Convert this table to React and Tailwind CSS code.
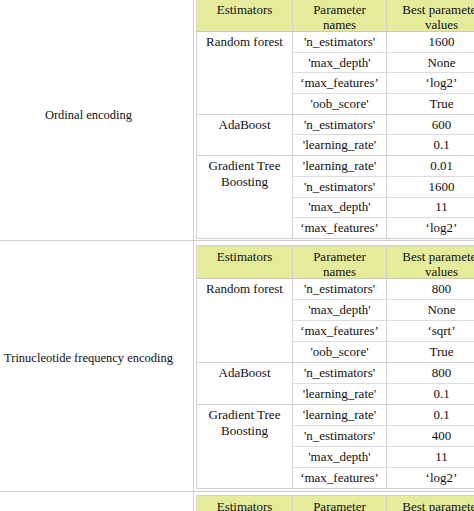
import React from "react";

const serif = { fontFamily: '"Liberation Serif", "Times New Roman", serif' };

const tables = [
  {
    label: "Ordinal encoding",
    groups: [
      { name: ["Random forest"], rows: [["'n_estimators'", "1600"], ["'max_depth'", "None"], ["\u2018max_features\u2019", "\u2018log2\u2019"], ["'oob_score'", "True"]] },
      { name: ["AdaBoost"], rows: [["'n_estimators'", "600"], ["'learning_rate'", "0.1"]] },
      { name: ["Gradient Tree", "Boosting"], rows: [["'learning_rate'", "0.01"], ["'n_estimators'", "1600"], ["'max_depth'", "11"], ["\u2018max_features\u2019", "\u2018log2\u2019"]] },
    ],
  },
  {
    label: "Trinucleotide frequency encoding",
    groups: [
      { name: ["Random forest"], rows: [["'n_estimators'", "800"], ["'max_depth'", "None"], ["\u2018max_features\u2019", "\u2018sqrt\u2019"], ["'oob_score'", "True"]] },
      { name: ["AdaBoost"], rows: [["'n_estimators'", "800"], ["'learning_rate'", "0.1"]] },
      { name: ["Gradient Tree", "Boosting"], rows: [["'learning_rate'", "0.1"], ["'n_estimators'", "400"], ["'max_depth'", "11"], ["\u2018max_features\u2019", "\u2018log2\u2019"]] },
    ],
  },
];

function Header() {
  return (
    <div className="flex h-[33px] border-b border-[#c8c8c8] bg-[#e4ec9c] leading-[15px] text-center">
      <div className="w-[96px] shrink-0 border-r border-[#d2d2d2] pt-[3px]">Estimators</div>
      <div className="w-[94px] shrink-0 border-r border-[#d2d2d2] pt-[3px]">
        Parameter
        <br />
        names
      </div>
      <div className="w-[110px] shrink-0 border-r border-[#d2d2d2] pt-[3px] whitespace-nowrap">
        Best parameter
        <br />
        values
      </div>
    </div>
  );
}

function DataTable({ groups, tight }) {
  const rowCls = tight ? "h-[20.7px]" : "h-[21px]";
  return (
    <div className="w-[301px] border-l border-t border-[#d2d2d2]">
      <Header />
      {groups.map((g, gi) => (
        <div key={gi} className="flex">
          <div className="w-[96px] shrink-0 border-b border-r border-[#d2d2d2] pt-[2px] text-center leading-[16px]">
            {g.name.map((n, i) => (
              <div key={i}>{n}</div>
            ))}
          </div>
          <div className="flex flex-col">
            {g.rows.map((r, ri) => (
              <div
                key={ri}
                className={
                  "flex border-b " +
                  rowCls +
                  (ri < g.rows.length - 1 ? " border-[#dcdcdc]" : " border-[#d2d2d2]")
                }
              >
                <div className="flex w-[94px] shrink-0 items-center justify-center border-r border-[#d2d2d2] leading-[16px] whitespace-nowrap">
                  {r[0]}
                </div>
                <div className="flex w-[110px] shrink-0 items-center justify-center border-r border-[#d2d2d2] leading-[16px]">
                  {r[1]}
                </div>
              </div>
            ))}
          </div>
        </div>
      ))}
    </div>
  );
}

export default function App() {
  return (
    <div className="h-[511px] w-[474px] overflow-hidden bg-white text-[13px] text-[#111]" style={serif}>
      <div className="-mt-[6px]">
        {/* Segment 1 */}
        <div className="flex border-b border-[#d0d0d0]">
          <div className="flex w-[194px] shrink-0 items-center justify-center border-r border-[#d0d0d0] pr-[16px] pb-[3px] text-[12.5px] whitespace-nowrap">
            {tables[0].label}
          </div>
          <div className="pl-[2px] pt-[4px] pb-[1px]">
            <DataTable groups={tables[0].groups} tight />
          </div>
        </div>
        {/* Segment 2 */}
        <div className="flex border-b border-[#d0d0d0]">
          <div className="flex w-[194px] shrink-0 items-center justify-center border-r border-[#d0d0d0] pr-[16px] pb-[16px] text-[12.5px] whitespace-nowrap">
            {tables[1].label}
          </div>
          <div className="pl-[2px] pt-[4px] pb-[2px]">
            <DataTable groups={tables[1].groups} />
          </div>
        </div>
        {/* Segment 3 */}
        <div className="flex">
          <div className="w-[194px] shrink-0 border-r border-[#d0d0d0]"></div>
          <div className="pl-[2px] pt-[3px]">
            <div className="w-[301px] border-l border-t border-[#d2d2d2]">
              <Header />
            </div>
          </div>
        </div>
      </div>
    </div>
  );
}
